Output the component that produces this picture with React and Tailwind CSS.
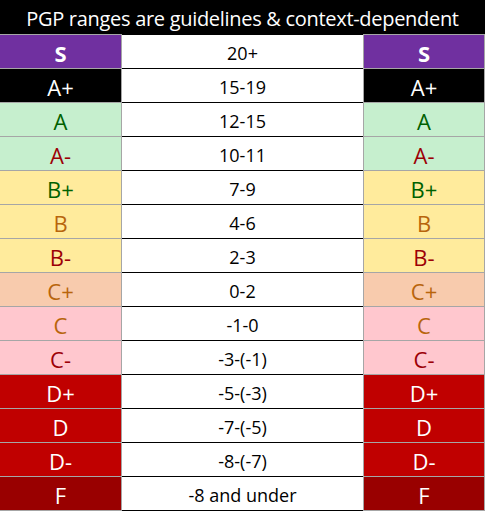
import React from "react";

const rows = [
  { g: "S", v: "20+", bg: "bg-[#7030a0]", fg: "text-white", bold: true },
  { g: "A+", v: "15-19", bg: "bg-black", fg: "text-white" },
  { g: "A", v: "12-15", bg: "bg-[#c6efce]", fg: "text-[#006100]" },
  { g: "A-", v: "10-11", bg: "bg-[#c6efce]", fg: "text-[#9c0006]" },
  { g: "B+", v: "7-9", bg: "bg-[#ffeb9c]", fg: "text-[#006100]" },
  { g: "B", v: "4-6", bg: "bg-[#ffeb9c]", fg: "text-[#b8650c]" },
  { g: "B-", v: "2-3", bg: "bg-[#ffeb9c]", fg: "text-[#9c0006]" },
  { g: "C+", v: "0-2", bg: "bg-[#f8cbad]", fg: "text-[#b8650c]" },
  { g: "C", v: "-1-0", bg: "bg-[#ffc7ce]", fg: "text-[#b8650c]" },
  { g: "C-", v: "-3-(-1)", bg: "bg-[#ffc7ce]", fg: "text-[#9c0006]" },
  { g: "D+", v: "-5-(-3)", bg: "bg-[#c00000]", fg: "text-white" },
  { g: "D", v: "-7-(-5)", bg: "bg-[#c00000]", fg: "text-white" },
  { g: "D-", v: "-8-(-7)", bg: "bg-[#c00000]", fg: "text-white" },
  { g: "F", v: "-8 and under", bg: "bg-[#990000]", fg: "text-white" },
];

export default function App() {
  return (
    <div className="w-[485px] h-[511px] bg-white font-['Open_Sans',sans-serif] overflow-hidden">
      <div className="h-[34px] bg-black text-white text-[20px] tracking-[-0.3px] flex items-center justify-center pt-[3px]">
        PGP ranges are guidelines &amp; context-dependent
      </div>
      {rows.map((r, i) => {
        const last = i === rows.length - 1;
        return (
          <div key={i} className={`flex ${last ? "h-[35px]" : "h-[34px]"}`}>
            <div className={`w-[122px] border-t border-r border-[#a6a6a6] ${last ? "border-b" : ""} ${r.bg} ${r.fg} ${r.bold ? "font-bold" : ""} text-[22px] flex items-center justify-center pt-[3px]`}>
              {r.g}
            </div>
            <div className={`flex-1 border-t border-black ${last ? "border-b" : ""} text-[18px] text-black flex items-center justify-center pt-[3px]`}>
              {r.v}
            </div>
            <div className={`w-[122px] border-t border-l border-r border-[#a6a6a6] ${last ? "border-b" : ""} ${r.bg} ${r.fg} ${r.bold ? "font-bold" : ""} text-[22px] flex items-center justify-center pt-[3px]`}>
              {r.g}
            </div>
          </div>
        );
      })}
    </div>
  );
}
